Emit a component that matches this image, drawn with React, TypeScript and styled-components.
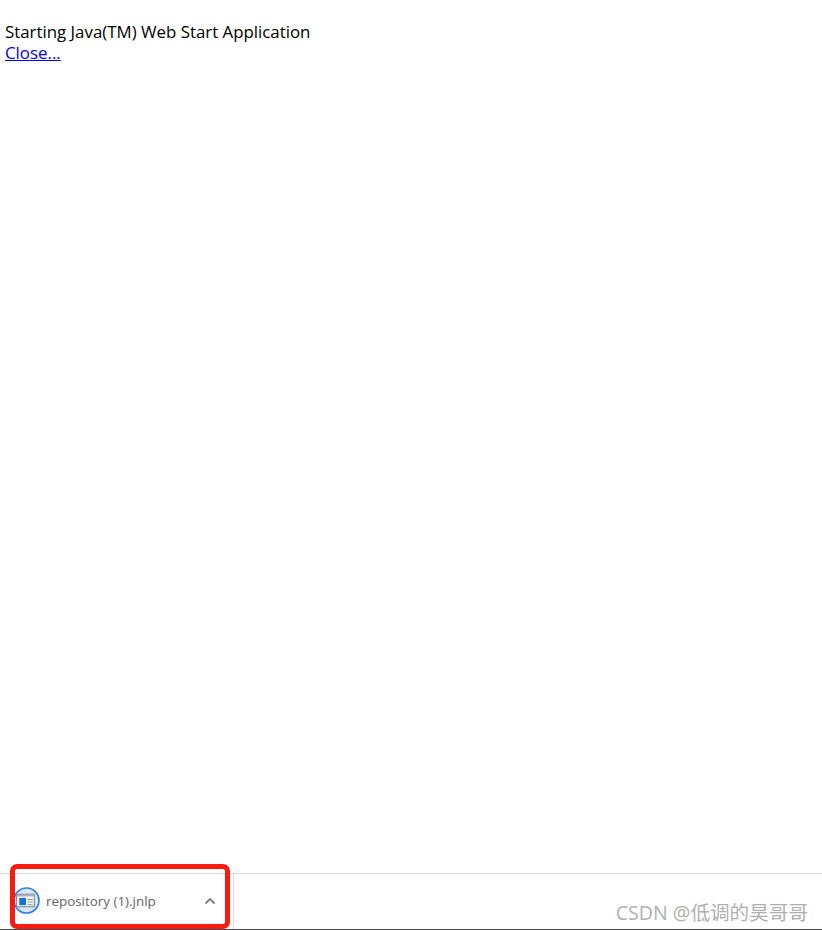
import React from "react";
import styled, { createGlobalStyle } from "styled-components";

const GlobalStyle = createGlobalStyle`
  html, body {
    margin: 0;
    padding: 0;
    background: #ffffff;
  }
`;

const PageWrapper = styled.div`
  position: relative;
  display: flex;
  flex-direction: column;
  width: 822px;
  height: 930px;
  overflow: hidden;
  font-family: "Open Sans", "Noto Sans", sans-serif;
`;

const PageBody = styled.div`
  flex: 1;
  padding: 21px 5px 0;
  font-size: 16.85px;
  line-height: 21px;
  color: #000000;
`;

const CloseLink = styled.a`
  display: block;
  width: fit-content;
  color: #0000ee;
  text-decoration: underline;
`;

const Shelf = styled.div`
  display: flex;
  align-items: center;
  height: 55px;
  border-top: 1px solid #d9d9d9;
  border-bottom: 1px solid #4a4a4a;
  padding: 0 14px 0 13px;
`;

const DownloadItem = styled.div`
  display: flex;
  align-items: center;
  width: 221px;
  height: 100%;
  box-sizing: border-box;
  padding: 0 17px 2px 0;
  border-right: 1px solid #dcdcdc;
`;

const FileIcon = styled.svg`
  width: 27px;
  height: 27px;
  flex: none;
`;

const FileName = styled.span`
  flex: 1;
  margin-left: 6px;
  font-size: 13.4px;
  color: #5f6368;
`;

const Chevron = styled.svg`
  width: 12px;
  height: 8px;
  flex: none;
`;

const Watermark = styled.span`
  margin-left: auto;
  padding-top: 19px;
  font-family: "Open Sans", "Noto Sans CJK SC", sans-serif;
  font-size: 19.6px;
  color: #b0b0b0;
`;

const Annotation = styled.div`
  position: absolute;
  left: 10px;
  top: 864px;
  width: 220px;
  height: 65px;
  box-sizing: border-box;
  border: 5px solid #fb1a12;
  border-radius: 7px;
  pointer-events: none;
`;

const App: React.FC = () => {
  return (
    <PageWrapper>
      <GlobalStyle />
      <PageBody>
        Starting Java(TM) Web Start Application
        <CloseLink href="#">Close...</CloseLink>
      </PageBody>
      <Shelf>
        <DownloadItem>
          <FileIcon viewBox="0 0 26 26">
            <circle cx="13" cy="13" r="12" fill="#d6e5f9" stroke="#2f7fe0" strokeWidth="1.6" />
            <rect x="3.5" y="7" width="17" height="12" fill="#f7f8fa" stroke="#7d868e" />
            <rect x="4" y="7.5" width="16" height="1.6" fill="#a9b0b7" />
            <rect x="6" y="10.5" width="6.5" height="7" fill="#1a73d8" />
            <path d="M14 12h5M14 14.5h5M14 17h5" stroke="#8b939a" strokeWidth="1" />
          </FileIcon>
          <FileName>repository (1).jnlp</FileName>
          <Chevron viewBox="0 0 12 8">
            <path d="M1.5 6.5L6 2l4.5 4.5" fill="none" stroke="#7a7e83" strokeWidth="1.8" />
          </Chevron>
        </DownloadItem>
        <Watermark>CSDN @低调的昊哥哥</Watermark>
      </Shelf>
      <Annotation />
    </PageWrapper>
  );
};

export default App;
